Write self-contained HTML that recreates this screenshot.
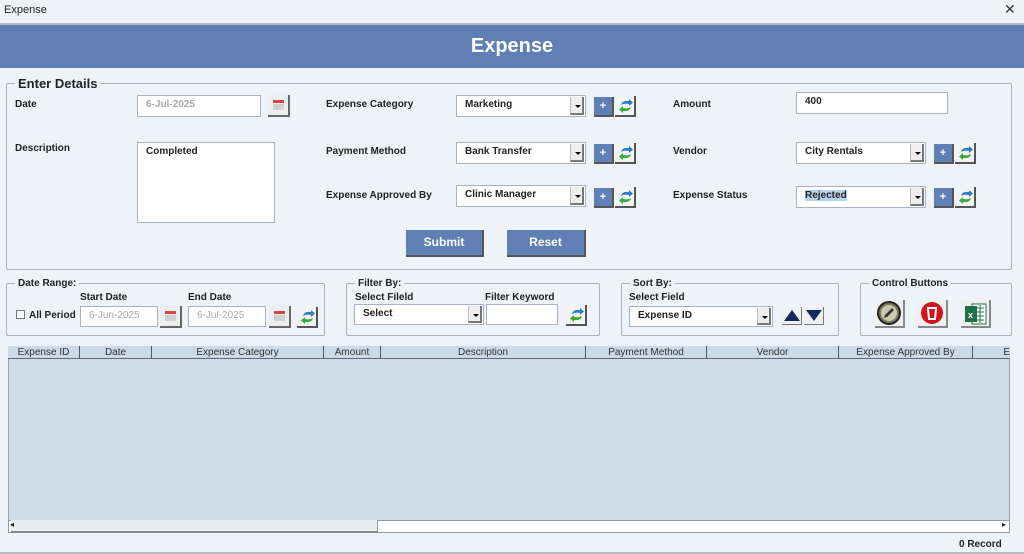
<!DOCTYPE html>
<html><head><meta charset="utf-8"><style>
*{box-sizing:border-box;margin:0;padding:0}
body{width:1024px;height:554px;background:#eef3f9;font-family:"Liberation Sans",Arial,sans-serif;position:relative;overflow:hidden;font-size:10px;color:#222}
.a{position:absolute}
.lbl{position:absolute;font-weight:bold;font-size:10px;color:#222}
.box{position:absolute;background:#fff;border:1px solid #a9b3c0;font-size:10px;font-weight:bold;padding:3px 8px;color:#222}
.dis{color:#aaa;font-weight:bold}
.dd{position:absolute;top:1px;right:1px;bottom:1px;width:14px;background:#eee;border-left:1px solid #bbb;border-right:2px solid #777;border-bottom:2px solid #777}
.dd:after{content:"";position:absolute;left:4px;top:8px;border-left:3px solid transparent;border-right:3px solid transparent;border-top:3px solid #000}
.plus{position:absolute;width:20px;height:20px;background:#5f7fb5;color:#fff;font-weight:bold;font-size:11px;text-align:center;line-height:19px;border-right:2px solid #555;border-bottom:2px solid #555}
.ref{position:absolute;width:21px;height:21px;background:#f2f4f3;border-right:2px solid #555;border-bottom:2px solid #555}
.ref svg{position:absolute;left:3px;top:2px}
.cal{position:absolute;width:22px;height:22px;background:#eceef0;border-right:2px solid #666;border-bottom:2px solid #666}
.cal:before{content:"";position:absolute;left:5px;top:5px;width:11px;height:3px;background:#d94545}
.cal:after{content:"";position:absolute;left:5px;top:9px;width:11px;height:6px;background:#cfcfcf}
fieldset{position:absolute;border:1px solid #aab4c0;border-radius:2px}
legend{font-weight:bold;font-size:10px;padding:0 3px;margin-left:8px}
.btn{position:absolute;background:#5f7fb5;color:#fff;font-weight:bold;font-size:12px;text-align:center;border-right:2px solid #555;border-bottom:2px solid #555}
.th{position:absolute;top:346px;height:13px;font-size:10px;color:#333;text-align:center;border-right:1px solid #556;line-height:13px}
</style></head><body>
<svg width="0" height="0" style="position:absolute"><defs>
<g id="rf"><path d="M3 7 Q4 2 11 3 L11 1 L15 4.5 L11 8 L11 6 Q6 5 3 7Z" fill="#2f7bc4"/><path d="M13 9 Q12 14 5 13 L5 15 L1 11.5 L5 8 L5 10 Q10 11 13 9Z" fill="#3aa83a"/></g>
</defs></svg>
<div class="a" style="left:4px;top:4px;font-size:11px;color:#222">Expense</div>
<div class="a" style="left:1004px;top:1px;font-size:14px;color:#333">✕</div>
<div class="a" style="left:0;top:23px;width:1024px;height:2px;background:#b5bcc4"></div>
<div class="a" style="left:0;top:25px;width:1024px;height:43px;background:#5f7fb5;color:#fff;font-weight:bold;font-size:20px;text-align:center;line-height:42px">Expense</div>

<fieldset style="left:6px;top:76px;width:1006px;height:194px"><legend style="font-size:13px">Enter Details</legend></fieldset>
<div class="lbl" style="left:15px;top:99px">Date</div>
<div class="box dis" style="left:137px;top:95px;width:124px;height:22px">6-Jul-2025</div>
<div class="cal" style="left:268px;top:95px"></div>
<div class="lbl" style="left:15px;top:143px">Description</div>
<div class="box" style="left:137px;top:142px;width:138px;height:81px">Completed</div>

<div class="lbl" style="left:326px;top:99px">Expense Category</div>
<div class="box" style="left:456px;top:95px;width:130px;height:22px">Marketing<div class="dd"></div></div>
<div class="plus" style="left:594px;top:97px">+</div><div class="ref" style="left:615px;top:96px"><svg width="16" height="16"><use href="#rf"/></svg></div>
<div class="lbl" style="left:326px;top:146px">Payment Method</div>
<div class="box" style="left:456px;top:142px;width:130px;height:22px">Bank Transfer<div class="dd"></div></div>
<div class="plus" style="left:594px;top:144px">+</div><div class="ref" style="left:615px;top:143px"><svg width="16" height="16"><use href="#rf"/></svg></div>
<div class="lbl" style="left:326px;top:190px">Expense Approved By</div>
<div class="box" style="left:456px;top:185px;width:130px;height:22px">Clinic Manager<div class="dd"></div></div>
<div class="plus" style="left:594px;top:188px">+</div><div class="ref" style="left:615px;top:187px"><svg width="16" height="16"><use href="#rf"/></svg></div>

<div class="lbl" style="left:673px;top:99px">Amount</div>
<div class="box" style="left:796px;top:92px;width:152px;height:22px">400</div>
<div class="lbl" style="left:673px;top:146px">Vendor</div>
<div class="box" style="left:796px;top:142px;width:130px;height:22px">City Rentals<div class="dd"></div></div>
<div class="plus" style="left:934px;top:144px">+</div><div class="ref" style="left:955px;top:143px"><svg width="16" height="16"><use href="#rf"/></svg></div>
<div class="lbl" style="left:673px;top:190px">Expense Status</div>
<div class="box" style="left:796px;top:186px;width:130px;height:22px"><span style="background:#b9d3ee">Rejected</span><div class="dd"></div></div>
<div class="plus" style="left:934px;top:188px">+</div><div class="ref" style="left:955px;top:187px"><svg width="16" height="16"><use href="#rf"/></svg></div>

<div class="btn" style="left:406px;top:230px;width:78px;height:27px;line-height:25px">Submit</div>
<div class="btn" style="left:507px;top:230px;width:79px;height:27px;line-height:25px">Reset</div>

<fieldset style="left:6px;top:278px;width:319px;height:58px"><legend>Date Range:</legend></fieldset>
<div class="a" style="left:16px;top:310px;width:9px;height:9px;border:1px solid #777;background:#fff"></div>
<div class="lbl" style="left:29px;top:310px">All Period</div>
<div class="lbl" style="left:80px;top:292px">Start Date</div>
<div class="box dis" style="left:80px;top:306px;width:78px;height:21px;font-weight:normal">6-Jun-2025</div>
<div class="cal" style="left:160px;top:306px"></div>
<div class="lbl" style="left:188px;top:292px">End Date</div>
<div class="box dis" style="left:188px;top:306px;width:78px;height:21px;font-weight:normal">6-Jul-2025</div>
<div class="cal" style="left:269px;top:306px"></div>
<div class="ref" style="left:297px;top:307px"><svg width="16" height="16"><use href="#rf"/></svg></div>

<fieldset style="left:346px;top:278px;width:254px;height:58px"><legend>Filter By:</legend></fieldset>
<div class="lbl" style="left:355px;top:292px">Select Fileld</div>
<div class="box" style="left:354px;top:304px;width:130px;height:21px">Select<div class="dd"></div></div>
<div class="lbl" style="left:485px;top:292px">Filter Keyword</div>
<div class="box" style="left:486px;top:304px;width:72px;height:21px"></div>
<div class="ref" style="left:566px;top:305px"><svg width="16" height="16"><use href="#rf"/></svg></div>

<fieldset style="left:621px;top:278px;width:218px;height:58px"><legend>Sort By:</legend></fieldset>
<div class="lbl" style="left:629px;top:292px">Select Field</div>
<div class="box" style="left:629px;top:306px;width:144px;height:21px">Expense ID<div class="dd"></div></div>
<div class="a" style="left:782px;top:307px;width:20px;height:18px;background:#eef0f2;border-right:1px solid #777;border-bottom:1px solid #777"><div class="a" style="left:2px;top:3px;border-left:8px solid transparent;border-right:8px solid transparent;border-bottom:11px solid #13295e"></div></div>
<div class="a" style="left:804px;top:307px;width:20px;height:18px;background:#eef0f2;border-right:1px solid #777;border-bottom:1px solid #777"><div class="a" style="left:2px;top:3px;border-left:8px solid transparent;border-right:8px solid transparent;border-top:11px solid #13295e"></div></div>

<fieldset style="left:860px;top:278px;width:152px;height:58px"><legend style="margin-left:8px">Control Buttons</legend></fieldset>
<div class="a" style="left:875px;top:300px;width:30px;height:28px;background:#eef0f2;border-right:2px solid #888;border-bottom:2px solid #888"><svg class="a" style="left:2px;top:1px" width="24" height="24"><circle cx="12" cy="12" r="11" fill="#7a7a5a" stroke="#222" stroke-width="2"/><circle cx="12" cy="12" r="8" fill="#c9c9b0"/><path d="M7 17 L8 14 L15 7 L17 9 L10 16Z" fill="#333"/></svg></div>
<div class="a" style="left:918px;top:300px;width:30px;height:28px;background:#eef0f2;border-right:2px solid #888;border-bottom:2px solid #888"><svg class="a" style="left:2px;top:1px" width="24" height="24"><circle cx="12" cy="12" r="11" fill="#d0161c"/><path d="M7 7 H17 M8 8 L9 18 H15 L16 8" fill="none" stroke="#fff" stroke-width="2"/></svg></div>
<div class="a" style="left:961px;top:300px;width:30px;height:28px;background:#eef0f2;border-right:2px solid #888;border-bottom:2px solid #888"><svg class="a" style="left:3px;top:2px" width="24" height="24"><rect x="8" y="2" width="14" height="20" fill="#fff" stroke="#1e7145"/><path d="M12 6H20M12 10H20M12 14H20M12 18H20M16 3V21" stroke="#1e7145" stroke-width="1"/><rect x="1" y="4" width="12" height="16" fill="#1e7145"/><text x="4" y="16" fill="#fff" font-size="9" font-weight="bold" font-family="Liberation Sans">x</text></svg></div>

<div class="a" style="left:8px;top:346px;width:1002px;height:187px;background:#cfdbe6;border:1px solid #9aa6b3"></div>
<div class="a" style="left:8px;top:346px;width:1002px;height:13px;background:#ccd9e6;border-bottom:1px solid #667"></div>
<div class="th" style="left:8px;width:72px">Expense ID</div>
<div class="th" style="left:80px;width:72px">Date</div>
<div class="th" style="left:152px;width:172px">Expense Category</div>
<div class="th" style="left:324px;width:57px">Amount</div>
<div class="th" style="left:381px;width:205px">Description</div>
<div class="th" style="left:586px;width:121px">Payment Method</div>
<div class="th" style="left:707px;width:132px">Vendor</div>
<div class="th" style="left:839px;width:134px">Expense Approved By</div>
<div class="th" style="left:973px;width:37px;border:none;text-align:right;overflow:hidden">E</div>
<div class="a" style="left:8px;top:520px;width:1002px;height:13px;background:#fff;border:1px solid #999"></div>
<div class="a" style="left:11px;top:520px;width:367px;height:13px;background:#eaedf0;border-right:1px solid #999;border-bottom:2px solid #888"></div>
<div class="a" style="left:10px;top:520px;font-size:8px">◂</div>
<div class="a" style="left:1002px;top:520px;font-size:8px">▸</div>
<div class="a" style="left:959px;top:539px;font-weight:bold;font-size:10px">0 Record</div>
<div class="a" style="left:0;top:552px;width:1024px;height:2px;background:#b5bcc4"></div>
</body></html>
